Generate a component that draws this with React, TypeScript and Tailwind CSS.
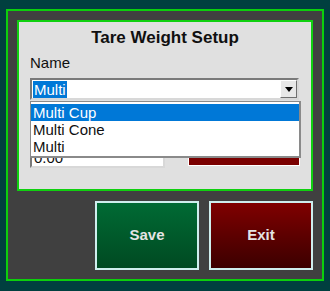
import React from 'react'

const font = { fontFamily: '"Liberation Sans", Arial, sans-serif' }

const options = ['Multi Cup', 'Multi Cone', 'Multi']

export default function App() {
  return (
    <div className="w-[330px] h-[291px] bg-[#003f3f] pt-[9px] pl-[6px]" style={font}>
      {/* Outer frame */}
      <div className="w-[318px] h-[272px] border-2 border-[#0ccf0c] bg-[#404040] p-[9px]">
        {/* Setup panel */}
        <div className="relative w-[296px] h-[171px] border-2 border-[#10d010] bg-[#e0e0e0] px-[11px]">
          <h1 className="text-center font-bold text-[17px] leading-none text-[#101010] pt-[7px]">
            Tare Weight Setup
          </h1>
          <p className="text-[15px] leading-none text-[#101010] mt-[9px]">Name</p>

          {/* Combo box */}
          <div className="mt-[8px] flex h-[22px] w-[269px] border-2 border-t-[#7a7a7a] border-l-[#7a7a7a] border-b-[#d8d8d8] border-r-[#d8d8d8] bg-white">
            <div className="flex-1 flex items-center pl-[1px]">
              <span className="bg-[#0078d7] text-white text-[15px] leading-[17px] px-[1px]">Multi</span>
            </div>
            <div className="w-[17px] h-full flex items-center justify-center bg-[#e8e8e8] border border-t-white border-l-white border-b-[#707070] border-r-[#707070]">
              <svg width="8" height="5" viewBox="0 0 8 5">
                <path d="M0 0h8L4 5z" fill="#000" />
              </svg>
            </div>
          </div>

          {/* Hidden row behind the list */}
          <div className="mt-[39px] flex items-start">
            <div className="mt-[8px] w-[135px] h-[21px] border-2 border-t-[#7a7a7a] border-l-[#7a7a7a] border-b-[#d8d8d8] border-r-[#d8d8d8] bg-white text-[15px] leading-[17px] pl-[2px] text-[#101010]">
              0.00
            </div>
            <div className="ml-[23px] w-[112px] h-[27px] bg-[#7a0000] border border-white" />
          </div>

          {/* Open drop-down list */}
          <div className="absolute left-[11px] top-[79px] w-[271px] border border-[#8a8a8a] border-r-2 border-b-2 bg-white pt-[2px] pb-[1px]">
            {options.map((o, i) => (
              <div
                key={o}
                className={
                  i === 0
                    ? 'h-[17px] bg-[#0078d7] text-white text-[15px] leading-[17px] pl-[2px]'
                    : 'h-[17px] text-[#101010] text-[15px] leading-[17px] pl-[2px]'
                }
              >
                {o}
              </div>
            ))}
          </div>
        </div>

        {/* Buttons */}
        <div className="mt-[10px] flex justify-end gap-[10px]">
          <button className="w-[104px] h-[69px] border-2 border-[#cfeeee] bg-gradient-to-b from-[#006a34] to-[#004a22] text-[#e4e4e4] font-bold text-[15px]">
            Save
          </button>
          <button className="w-[104px] h-[69px] border-2 border-[#cfeeee] bg-gradient-to-b from-[#800000] to-[#3c0000] text-[#e4e4e4] font-bold text-[15px]">
            Exit
          </button>
        </div>
      </div>
    </div>
  )
}
